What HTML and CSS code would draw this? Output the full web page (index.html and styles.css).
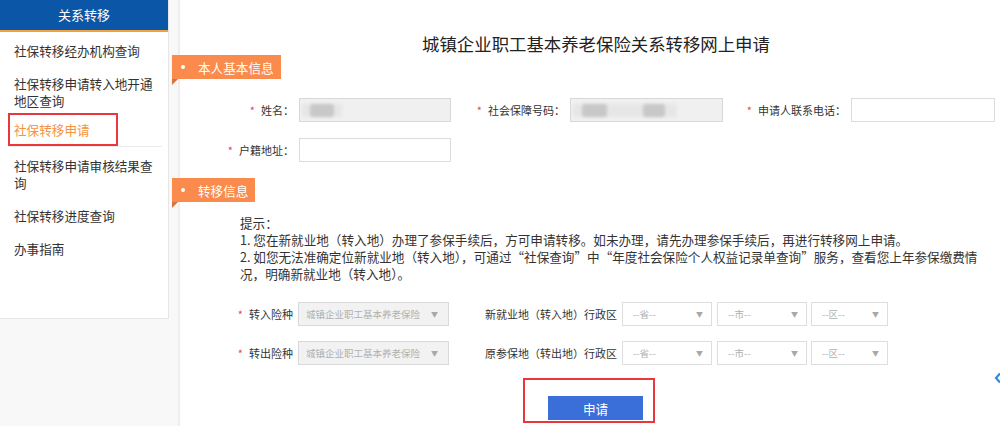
FILE: index.html
```html
<!DOCTYPE html>
<html lang="zh-CN">
<head>
<meta charset="utf-8">
<title>城镇企业职工基本养老保险关系转移网上申请</title>
<link rel="stylesheet" href="styles.css">
</head>
<body>
<div class="page">
  <aside class="side-col">
    <nav class="sidebar">
      <div class="side-head">关系转移</div>
      <ul class="side-menu">
        <li>社保转移经办机构查询</li>
        <li>社保转移申请转入地开通地区查询</li>
        <li class="active"><span class="mark">社保转移申请</span></li>
        <li>社保转移申请审核结果查询</li>
        <li>社保转移进度查询</li>
        <li>办事指南</li>
      </ul>
    </nav>
  </aside>

  <main class="main">
    <h1 class="title">城镇企业职工基本养老保险关系转移网上申请</h1>

    <div class="tab"><i class="dot"></i>本人基本信息</div>

    <div class="row row-first">
      <div class="field">
        <label class="label w119"><span class="req">*</span>姓名：</label>
        <div class="input readonly w152">
          <span class="blur b-light" style="width:40px"></span>
          <span class="blur b-dark" style="width:24px;margin-left:-32px"></span>
        </div>
      </div>
      <div class="field">
        <label class="label w119"><span class="req">*</span>社会保障号码：</label>
        <div class="input readonly w153">
          <span class="blur b-light" style="width:104px"></span>
          <span class="blur b-dark" style="width:25px;margin-left:-95px"></span>
          <span class="blur b-dark" style="width:22px;margin-left:36px"></span>
        </div>
      </div>
      <div class="field">
        <label class="label w128"><span class="req">*</span>申请人联系电话：</label>
        <div class="input w144"></div>
      </div>
    </div>

    <div class="row row-second">
      <div class="field">
        <label class="label w119"><span class="req">*</span>户籍地址：</label>
        <div class="input w152"></div>
      </div>
    </div>

    <div class="tab tab-second"><i class="dot"></i>转移信息</div>

    <div class="hint">
      提示：<br>
      1. 您在新就业地（转入地）办理了参保手续后，方可申请转移。如未办理，请先办理参保手续后，再进行转移网上申请。<br>
      2. 如您无法准确定位新就业地（转入地），可通过“社保查询”中“年度社会保险个人权益记录单查询”服务，查看您上年参保缴费情<br>
      况，明确新就业地（转入地）。
    </div>

    <div class="row row-third">
      <div class="field">
        <label class="label w118"><span class="req">*</span>转入险种</label>
        <div class="select disabled w151"><span>城镇企业职工基本养老保险</span><i class="arrow">▼</i></div>
      </div>
      <div class="field">
        <label class="label w173">新就业地（转入地）行政区</label>
        <div class="select w90"><span>--省--</span><i class="arrow">▼</i></div>
        <div class="select w90 ml5"><span>--市--</span><i class="arrow">▼</i></div>
        <div class="select w77 ml4"><span>--区--</span><i class="arrow">▼</i></div>
      </div>
    </div>

    <div class="row row-fourth">
      <div class="field">
        <label class="label w118"><span class="req">*</span>转出险种</label>
        <div class="select disabled w151"><span>城镇企业职工基本养老保险</span><i class="arrow">▼</i></div>
      </div>
      <div class="field">
        <label class="label w173">原参保地（转出地）行政区</label>
        <div class="select w90"><span>--省--</span><i class="arrow">▼</i></div>
        <div class="select w90 ml5"><span>--市--</span><i class="arrow">▼</i></div>
        <div class="select w77 ml4"><span>--区--</span><i class="arrow">▼</i></div>
      </div>
    </div>

    <div class="submit-wrap">
      <button class="btn-submit" type="button">申请</button>
    </div>
  </main>
</div>

<a class="side-toggle" href="#">
  <svg width="8" height="12" viewBox="0 0 8 12"><polyline points="6,1.5 2,6 6,10.5" fill="none" stroke="#2f8be0" stroke-width="2.2"/></svg>
</a>
</body>
</html>
```

FILE: styles.css
```css
* { box-sizing: border-box; }

html, body {
  margin: 0;
  padding: 0;
  background: #ffffff;
  font-family: "Noto Sans CJK SC", "Noto Sans", sans-serif;
  color: #333333;
}

.page {
  display: flex;
  min-height: 100vh;
}

/* left navigation column */
.side-col {
  width: 180px;
  flex: none;
  background: #f8f8f8;
  border-right: 2px solid #eeeeee;
}

.sidebar {
  width: 169px;
  background: #ffffff;
  border-right: 1px solid #e6e6e6;
  border-bottom: 1px solid #e6e6e6;
  padding-bottom: 53px;
}

.side-head {
  height: 32px;
  line-height: 30px;
  background: #0b56a6;
  border-bottom: 2px solid #f2a23e;
  color: #ffffff;
  font-size: 13px;
  text-align: center;
}

.side-menu {
  list-style: none;
  margin: 0;
  padding: 2px 0 0;
}

.side-menu li {
  padding: 8px 10px 8px 14px;
  font-size: 12.6px;
  line-height: 17px;
  color: #333333;
}

.side-menu li.active {
  margin: -4px 6px 0 8px;
  padding: 0;
  border-bottom: 1px solid #ebebeb;
}

.side-menu li.active + li {
  padding-top: 10px;
}

.side-menu .mark {
  display: block;
  width: 110px;
  padding: 6px 4px;
  border: 2px solid #e8383d;
  color: #f7923f;
}

/* main form area */
.main {
  flex: 1;
  background: #ffffff;
}

.title {
  margin: 0;
  padding: 34px 0 0 12px;
  font-size: 17.4px;
  line-height: 20px;
  font-weight: normal;
  color: #222222;
  text-align: center;
}

.tab {
  position: relative;
  display: flex;
  align-items: center;
  width: fit-content;
  height: 24px;
  margin: 1px 0 0 -8px;
  padding: 0 7px 0 9px;
  background: #fa8b4c;
  color: #ffffff;
  font-size: 12.6px;
}

.tab::after {
  content: "";
  position: absolute;
  left: 0;
  top: 100%;
  border-top: 6px solid #d9733b;
  border-right: 6px solid transparent;
}

.tab .dot {
  width: 4px;
  height: 4px;
  border-radius: 50%;
  background: #ffffff;
  margin-right: 13px;
}

.tab-second { margin-top: 16px; }

.row {
  display: flex;
  align-items: center;
  height: 24px;
}

.row-first { margin-top: 19px; }
.row-second { margin-top: 16px; }
.row-third { margin-top: 20px; }
.row-fourth { margin-top: 15px; }

.field {
  display: flex;
  align-items: center;
}

.label {
  padding-right: 5px;
  text-align: right;
  font-size: 11px;
  color: #333333;
  white-space: nowrap;
}

.req {
  color: #e8484a;
  margin-right: 6px;
}

.w77 { width: 77px; }
.w90 { width: 90px; }
.w118 { width: 118px; }
.w119 { width: 119px; }
.w128 { width: 128px; }
.w144 { width: 144px; }
.w151 { width: 151px; }
.w152 { width: 152px; }
.w153 { width: 153px; }
.w173 { width: 173px; }
.ml4 { margin-left: 4px; }
.ml5 { margin-left: 5px; }

.input {
  display: flex;
  align-items: center;
  height: 24px;
  padding-left: 2px;
  border: 1px solid #dcdcdc;
  background: #ffffff;
  overflow: hidden;
}

.input.readonly {
  background: #f0f0f0;
  border-color: #d8d8d8;
}

/* redacted personal data */
.blur {
  display: block;
  height: 13px;
  border-radius: 3px;
  filter: blur(1.6px);
}

.b-light { background: #e6e6e6; }
.b-dark { background: #c8c8c8; }

.hint {
  margin: 12px 0 0 60px;
  font-size: 12.6px;
  line-height: 17px;
  color: #333333;
  white-space: nowrap;
}

.select {
  display: flex;
  align-items: center;
  justify-content: space-between;
  height: 24px;
  padding: 0 8px 0 10px;
  border: 1px solid #dedede;
  background: #ffffff;
  font-size: 9.5px;
  color: #b0b0b0;
}

.select.disabled {
  padding: 0 10px 0 7px;
  background: #f2f2f2;
  border-color: #d9d9d9;
}

.select .arrow {
  font-style: normal;
  font-size: 7px;
  color: #a8a8a8;
}

.submit-wrap {
  width: 132px;
  margin: 13px 0 0 343px;
  padding: 16px 10px 1px 23px;
  border: 2px solid #e8383d;
}

.btn-submit {
  display: block;
  width: 95px;
  height: 24px;
  padding: 0;
  border: none;
  background: #3a6ed8;
  color: #ffffff;
  font-family: inherit;
  font-size: 12.6px;
}

/* floating collapse handle on the right edge */
.side-toggle {
  position: fixed;
  right: -2px;
  top: 372px;
  display: block;
  width: 8px;
  height: 12px;
}

.side-toggle svg { display: block; }
```
